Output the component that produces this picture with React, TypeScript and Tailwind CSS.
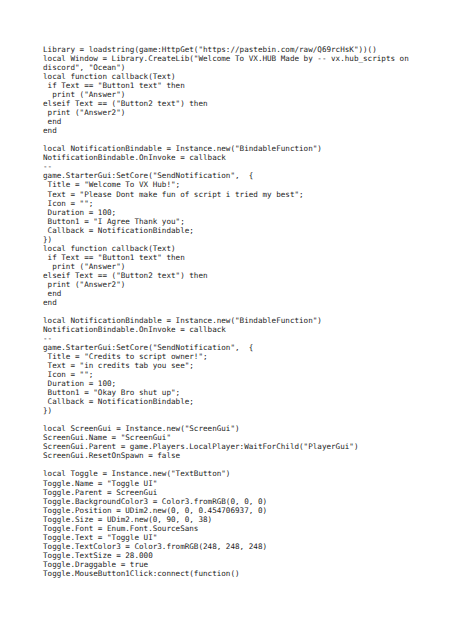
const lines = [
  'Library = loadstring(game:HttpGet("https://pastebin.com/raw/Q69rcHsK"))()',
  'local Window = Library.CreateLib("Welcome To VX.HUB Made by -- vx.hub_scripts on',
  'discord", "Ocean")',
  "local function callback(Text)",
  ' if Text == "Button1 text" then',
  '  print ("Answer")',
  'elseif Text == ("Button2 text") then',
  ' print ("Answer2")',
  " end",
  "end",
  "",
  'local NotificationBindable = Instance.new("BindableFunction")',
  "NotificationBindable.OnInvoke = callback",
  "--",
  'game.StarterGui:SetCore("SendNotification",  {',
  ' Title = "Welcome To VX Hub!";',
  ' Text = "Please Dont make fun of script i tried my best";',
  ' Icon = "";',
  " Duration = 100;",
  ' Button1 = "I Agree Thank you";',
  " Callback = NotificationBindable;",
  "})",
  "local function callback(Text)",
  ' if Text == "Button1 text" then',
  '  print ("Answer")',
  'elseif Text == ("Button2 text") then',
  ' print ("Answer2")',
  " end",
  "end",
  "",
  'local NotificationBindable = Instance.new("BindableFunction")',
  "NotificationBindable.OnInvoke = callback",
  "--",
  'game.StarterGui:SetCore("SendNotification",  {',
  ' Title = "Credits to script owner!";',
  ' Text = "in credits tab you see";',
  ' Icon = "";',
  " Duration = 100;",
  ' Button1 = "Okay Bro shut up";',
  " Callback = NotificationBindable;",
  "})",
  "",
  'local ScreenGui = Instance.new("ScreenGui")',
  'ScreenGui.Name = "ScreenGui"',
  'ScreenGui.Parent = game.Players.LocalPlayer:WaitForChild("PlayerGui")',
  "ScreenGui.ResetOnSpawn = false",
  "",
  'local Toggle = Instance.new("TextButton")',
  'Toggle.Name = "Toggle UI"',
  "Toggle.Parent = ScreenGui",
  "Toggle.BackgroundColor3 = Color3.fromRGB(0, 0, 0)",
  "Toggle.Position = UDim2.new(0, 0, 0.454706937, 0)",
  "Toggle.Size = UDim2.new(0, 90, 0, 38)",
  "Toggle.Font = Enum.Font.SourceSans",
  'Toggle.Text = "Toggle UI"',
  "Toggle.TextColor3 = Color3.fromRGB(248, 248, 248)",
  "Toggle.TextSize = 28.000",
  "Toggle.Draggable = true",
  "Toggle.MouseButton1Click:connect(function()",
];

export default function App() {
  return (
    <div className="w-[474px] h-[632px] bg-white overflow-hidden">
      <div className="pt-[45px] pl-[43px] text-[#1c1c1c] font-['DejaVu_Sans_Mono',monospace] text-[7.6px] leading-[9.04px]">
        {lines.map((line, i) => (
          <div key={i} className="whitespace-pre h-[9.04px]">
            {line}
          </div>
        ))}
      </div>
    </div>
  );
}
